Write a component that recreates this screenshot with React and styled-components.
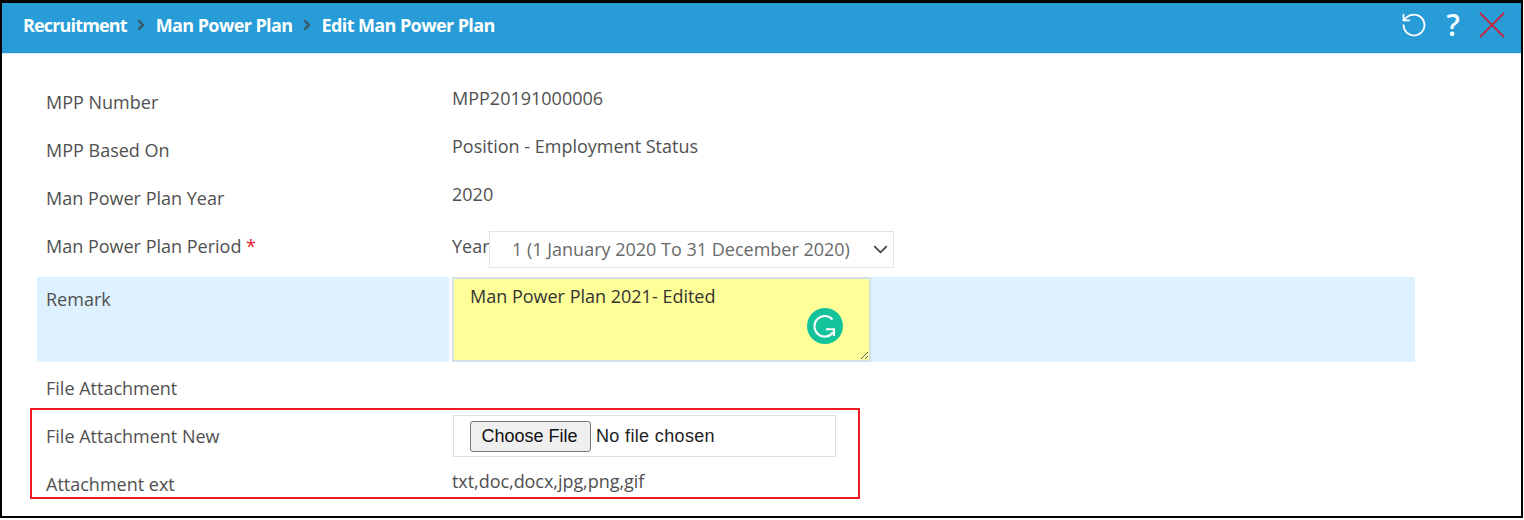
import React from 'react';
import styled, { createGlobalStyle } from 'styled-components';
import { RotateCcw, ChevronRight, ChevronDown } from 'lucide-react';

const GlobalStyle = createGlobalStyle`
  html, body {
    margin: 0;
    padding: 0;
    background: #fff;
  }
  body {
    font-family: "Open Sans", "Liberation Sans", sans-serif;
  }
`;

const Frame = styled.div`
  box-sizing: border-box;
  width: 1523px;
  height: 518px;
  border-style: solid;
  border-color: #000;
  border-width: 3px 2px 2px 2px;
  overflow: hidden;
`;

const Header = styled.header`
  height: 51px;
  background: #279cd6;
  border-bottom: 1px solid #cfe8f5;
  box-sizing: border-box;
  display: flex;
  align-items: center;
  justify-content: space-between;
  padding: 0 15px 6px 21px;
`;

const Crumbs = styled.nav`
  display: flex;
  align-items: center;
  color: #fff;
  font-size: 18px;
  font-weight: 700;
`;

const Crumb = styled.span`
  letter-spacing: ${(p) => p.$spacing || -0.6}px;
`;

const Separator = styled.span`
  display: flex;
  width: 29px;
  justify-content: center;
  color: #3f5563;
`;

const Tools = styled.div`
  display: flex;
  align-items: center;
  gap: 11px;
  color: #fff;
`;

const Help = styled.span`
  font-size: 30px;
  font-weight: 600;
  line-height: 30px;
  width: 28px;
  text-align: center;
  color: #f2f9fd;
`;

const Body = styled.main`
  padding: 24px 0 0 35px;
  width: 1378px;
  color: #505050;
  font-size: 18px;
`;

const Row = styled.div`
  display: grid;
  grid-template-columns: 412px 1fr;
  height: 48px;
`;

const Label = styled.div`
  box-sizing: border-box;
  padding: 12px 0 0 9px;
  line-height: 24px;
`;

const Required = styled.span`
  color: #e8202a;
`;

const Value = styled.div`
  box-sizing: border-box;
  padding: 8px 0 0 3px;
  line-height: 24px;
`;

const PeriodValue = styled(Value)`
  display: flex;
  align-items: flex-start;
  padding-top: 9px;
`;

const YearText = styled.span`
  width: 37px;
  padding-top: 3px;
  white-space: nowrap;
`;

const SelectWrap = styled.div`
  position: relative;
  width: 405px;
  height: 37px;
  color: #444;
`;

const SelectArrow = styled(ChevronDown)`
  position: absolute;
  left: 380px;
  top: 7px;
  pointer-events: none;
`;

const PeriodSelect = styled.select`
  display: block;
  width: 100%;
  height: 100%;
  box-sizing: border-box;
  appearance: none;
  padding: 0 36px 2px 22px;
  border: 1px solid #e3e3e3;
  background: #fff;
  color: #6a6a6a;
  font: inherit;
  border-radius: 0;
`;

const RemarkRow = styled.div`
  display: grid;
  grid-template-columns: 412px 1fr;
  column-gap: 3px;
  height: 85px;
  margin-top: 7px;
`;

const RemarkLabel = styled(Label)`
  background: #ddf1ff;
  padding-top: 10px;
`;

const RemarkCell = styled.div`
  background: #ddf1ff;
  position: relative;
`;

const RemarkInput = styled.textarea`
  display: block;
  box-sizing: border-box;
  width: 419px;
  height: 85px;
  padding: 0 16px;
  border: 2px solid #d3e0e8;
  border-radius: 0;
  background: #ffff99;
  color: #333;
  font: inherit;
  line-height: 34px;
  outline: none;
`;

const GrammarlyBadge = styled.svg`
  position: absolute;
  left: 355px;
  top: 31px;
`;

const AttachmentRow = styled(Row)`
  margin-top: 2px;
`;

const Marked = styled.section`
  width: 826px;
  height: 87px;
  margin: -4px 0 0 -7px;
  border: 2px solid #ed1c24;
`;

const MarkedRow = styled.div`
  display: grid;
  grid-template-columns: 412px 1fr;
  height: 48px;
  padding-left: 5px;
`;

const MarkedLabel = styled(Label)`
  padding-top: 14px;
`;

const FileBox = styled.div`
  display: flex;
  align-items: center;
  gap: 5px;
  box-sizing: border-box;
  width: 383px;
  height: 42px;
  margin: 5px 0 0 4px;
  padding-left: 16px;
  border: 1px solid #dedede;
  font-family: "Liberation Sans", Arial, sans-serif;
  font-size: 18px;
  color: #222;
`;

const FileButton = styled.button`
  width: 121px;
  height: 31px;
  padding: 0 2px 0 0;
  border: 1px solid #767676;
  border-radius: 3px;
  background: #efefef;
  color: #111;
  font: inherit;
`;

const FileName = styled.span`
  letter-spacing: 0.35px;
`;

const ExtValue = styled.div`
  padding: 11px 0 0 3px;
  line-height: 24px;
  letter-spacing: -0.05px;
`;

const App = () => (
  <>
    <GlobalStyle />
    <Frame>
      <Header>
        <Crumbs>
          <Crumb $spacing={-0.85}>Recruitment</Crumb>
          <Separator><ChevronRight size={16} strokeWidth={3.5} /></Separator>
          <Crumb>Man Power Plan</Crumb>
          <Separator><ChevronRight size={16} strokeWidth={3.5} /></Separator>
          <Crumb>Edit Man Power Plan</Crumb>
        </Crumbs>
        <Tools>
          <RotateCcw size={28} strokeWidth={1.5} />
          <Help>?</Help>
          <svg width="28" height="28" viewBox="0 0 28 28" fill="none" stroke="#c4283c" strokeWidth="1.8">
            <path d="M2 2 L26 26 M26 2 L2 26" />
          </svg>
        </Tools>
      </Header>
      <Body>
        <Row>
          <Label>MPP Number</Label>
          <Value>MPP20191000006</Value>
        </Row>
        <Row>
          <Label>MPP Based On</Label>
          <Value>Position - Employment Status</Value>
        </Row>
        <Row>
          <Label>Man Power Plan Year</Label>
          <Value>2020</Value>
        </Row>
        <Row>
          <Label>Man Power Plan Period <Required>*</Required></Label>
          <PeriodValue>
            <YearText>Year</YearText>
            <SelectWrap>
              <PeriodSelect defaultValue="1">
                <option value="1">1 (1 January 2020 To 31 December 2020)</option>
              </PeriodSelect>
              <SelectArrow size={23} strokeWidth={1.8} />
            </SelectWrap>
          </PeriodValue>
        </Row>
        <RemarkRow>
          <RemarkLabel>Remark</RemarkLabel>
          <RemarkCell>
            <RemarkInput defaultValue="Man Power Plan 2021- Edited" spellCheck={false} />
            <GrammarlyBadge width="36" height="36" viewBox="0 0 36 36">
              <circle cx="18" cy="18" r="18" fill="#15c39a" />
              <path d="M25.5 11.5 A10.3 10.3 0 1 0 26 24.5" fill="none" stroke="#fff" strokeWidth="2.1" />
              <path d="M19 21.2 H27 V28" fill="none" stroke="#fff" strokeWidth="2.1" />
            </GrammarlyBadge>
          </RemarkCell>
        </RemarkRow>
        <AttachmentRow>
          <Label>File Attachment</Label>
        </AttachmentRow>
        <Marked>
          <MarkedRow>
            <MarkedLabel>File Attachment New</MarkedLabel>
            <FileBox>
              <FileButton type="button">Choose File</FileButton>
              <FileName>No file chosen</FileName>
            </FileBox>
          </MarkedRow>
          <MarkedRow>
            <MarkedLabel>Attachment ext</MarkedLabel>
            <ExtValue>txt,doc,docx,jpg,png,gif</ExtValue>
          </MarkedRow>
        </Marked>
      </Body>
    </Frame>
  </>
);

export default App;
